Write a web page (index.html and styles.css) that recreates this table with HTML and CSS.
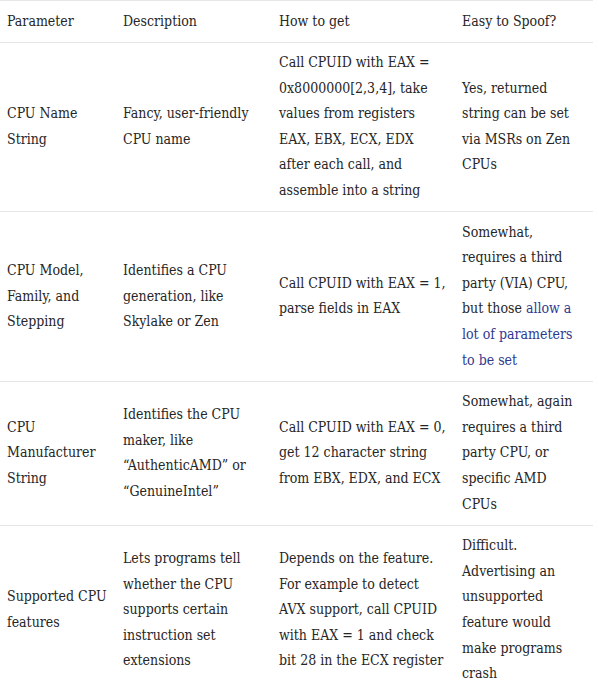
FILE: index.html
```html
<!DOCTYPE html>
<html>
<head>
<meta charset="utf-8">
<link rel="stylesheet" href="styles.css">
</head>
<body>
<table class="spec">
  <colgroup>
    <col class="c1"><col class="c2"><col class="c3"><col class="c4">
  </colgroup>
  <thead>
    <tr><th>Parameter</th><th>Description</th><th>How to get</th><th class="last">Easy to Spoof?</th></tr>
  </thead>
  <tbody>
    <tr>
      <td>CPU Name String</td>
      <td>Fancy, user-friendly CPU name</td>
      <td>Call CPUID with EAX = 0x8000000[2,3,4], take values from registers EAX, EBX, ECX, EDX after each call, and assemble into a string</td>
      <td class="last">Yes, returned string can be set via MSRs on Zen CPUs</td>
    </tr>
    <tr>
      <td>CPU Model, Family, and Stepping</td>
      <td>Identifies a CPU generation, like Skylake or Zen</td>
      <td>Call CPUID with EAX = 1, parse fields in EAX</td>
      <td class="last">Somewhat, requires a third party (VIA) CPU, but those <a class="link" href="#">allow a lot of parameters to be set</a></td>
    </tr>
    <tr>
      <td>CPU Manufacturer String</td>
      <td>Identifies the CPU maker, like “AuthenticAMD” or “GenuineIntel”</td>
      <td>Call CPUID with EAX = 0, get 12 character string from EBX, EDX, and ECX</td>
      <td class="last">Somewhat, again requires a third party CPU, or specific AMD CPUs</td>
    </tr>
    <tr>
      <td>Supported CPU features</td>
      <td>Lets programs tell whether the CPU supports certain instruction set extensions</td>
      <td>Depends on the feature. For example to detect AVX support, call CPUID with EAX = 1 and check bit 28 in the ECX register</td>
      <td class="last">Difficult. Advertising an unsupported feature would make programs crash</td>
    </tr>
  </tbody>
</table>
</body>
</html>
```
FILE: styles.css
```css
html, body {
  margin: 0;
  padding: 0;
  background: #ffffff;
}
.spec {
  width: 593px;
  table-layout: fixed;
  border-collapse: collapse;
  font-family: "DejaVu Serif", serif;
  font-stretch: condensed;
  font-size: 14px;
  line-height: 25.6px;
  color: #262626;
}
.c1 { width: 116px; }
.c2 { width: 156px; }
.c3 { width: 183px; }
.c4 { width: 138px; }
.spec th, .spec td {
  padding: 7.5px 7px;
  text-align: left;
  vertical-align: middle;
  font-weight: normal;
  border-top: 1px solid #e6e6e6;
  border-bottom: 1px solid #e6e6e6;
}
.spec .last {
  padding-right: 14px;
}
.link {
  color: #2f3a8f;
  text-decoration: none;
}
```
